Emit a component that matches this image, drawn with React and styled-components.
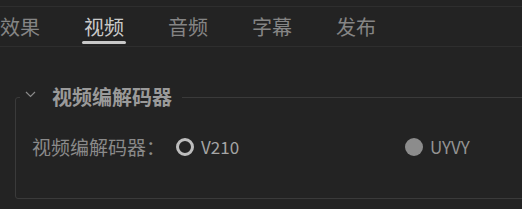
import React from "react";
import styled, { createGlobalStyle } from "styled-components";

const GlobalStyle = createGlobalStyle`
  html, body {
    margin: 0;
    padding: 0;
    background: #232323;
    overflow: hidden;
  }
  body {
    font-family: "Noto Sans CJK SC", "Noto Sans", sans-serif;
  }
`;

const Page = styled.div`
  width: 522px;
  height: 209px;
  padding-top: 6px;
  box-sizing: border-box;
  background: #232323;
  overflow: hidden;
`;

const TabBar = styled.nav`
  display: flex;
  gap: 44px;
  height: 39px;
  align-items: center;
  border-top: 1px solid #2e2e2e;
  border-bottom: 1px solid #2e2e2e;
`;

const Tab = styled.div`
  position: relative;
  font-size: 20px;
  line-height: 24px;
  color: ${(p) => (p.active ? "#c9c9c9" : "#858585")};

  &::after {
    content: "";
    display: ${(p) => (p.active ? "block" : "none")};
    position: absolute;
    left: -2px;
    right: -2px;
    bottom: -5px;
    height: 3px;
    border-radius: 2px;
    background: #c8c8c8;
  }
`;

const Content = styled.div`
  padding: 38px 0 0 15px;
`;

const Group = styled.fieldset`
  box-sizing: border-box;
  height: 114px;
  margin: 0 -30px 0 0;
  padding: 26px 0 0 16px;
  border: 1px solid #3a3a3a;
  border-radius: 3px;
`;

const Legend = styled.legend`
  display: flex;
  align-items: center;
  margin-left: -12px;
  padding: 0 10px 0 5px;
  height: 24px;
  font-size: 20px;
  line-height: 24px;
  font-weight: 700;
  color: #9a9a9a;
`;

const Chevron = styled.svg`
  width: 11px;
  height: 7px;
  margin-right: 16px;
  margin-top: -6px;
`;

const Row = styled.div`
  display: flex;
  align-items: center;
  height: 24px;
`;

const Label = styled.span`
  font-size: 19px;
  line-height: 24px;
  color: #8a8a8a;
  width: 144px;
`;

const Option = styled.label`
  display: flex;
  align-items: center;
  gap: 7px;
  width: ${(p) => p.width || "auto"};
  font-size: 17px;
  line-height: 24px;
  color: ${(p) => (p.checked ? "#a5a5a5" : "#939393")};
`;

const Dot = styled.span`
  width: 18px;
  height: 18px;
  box-sizing: border-box;
  border-radius: 50%;
  border: ${(p) => (p.checked ? "3px solid #bdbdbd" : "none")};
  background: ${(p) => (p.checked ? "transparent" : "#8c8c8c")};
`;

const tabs = ["效果", "视频", "音频", "字幕", "发布"];

export default function App() {
  return (
    <Page>
      <GlobalStyle />
      <TabBar>
        {tabs.map((t) => (
          <Tab key={t} active={t === "视频"}>
            {t}
          </Tab>
        ))}
      </TabBar>
      <Content>
        <Group>
          <Legend>
            <Chevron viewBox="0 0 11 7">
              <path d="M1 1l4.5 4.5L10 1" fill="none" stroke="#8a8a8a" strokeWidth="1.2" />
            </Chevron>
            视频编解码器
          </Legend>
          <Row>
            <Label>视频编解码器：</Label>
            <Option checked width="229px">
              <Dot checked />
              V210
            </Option>
            <Option>
              <Dot />
              UYVY
            </Option>
          </Row>
        </Group>
      </Content>
    </Page>
  );
}
